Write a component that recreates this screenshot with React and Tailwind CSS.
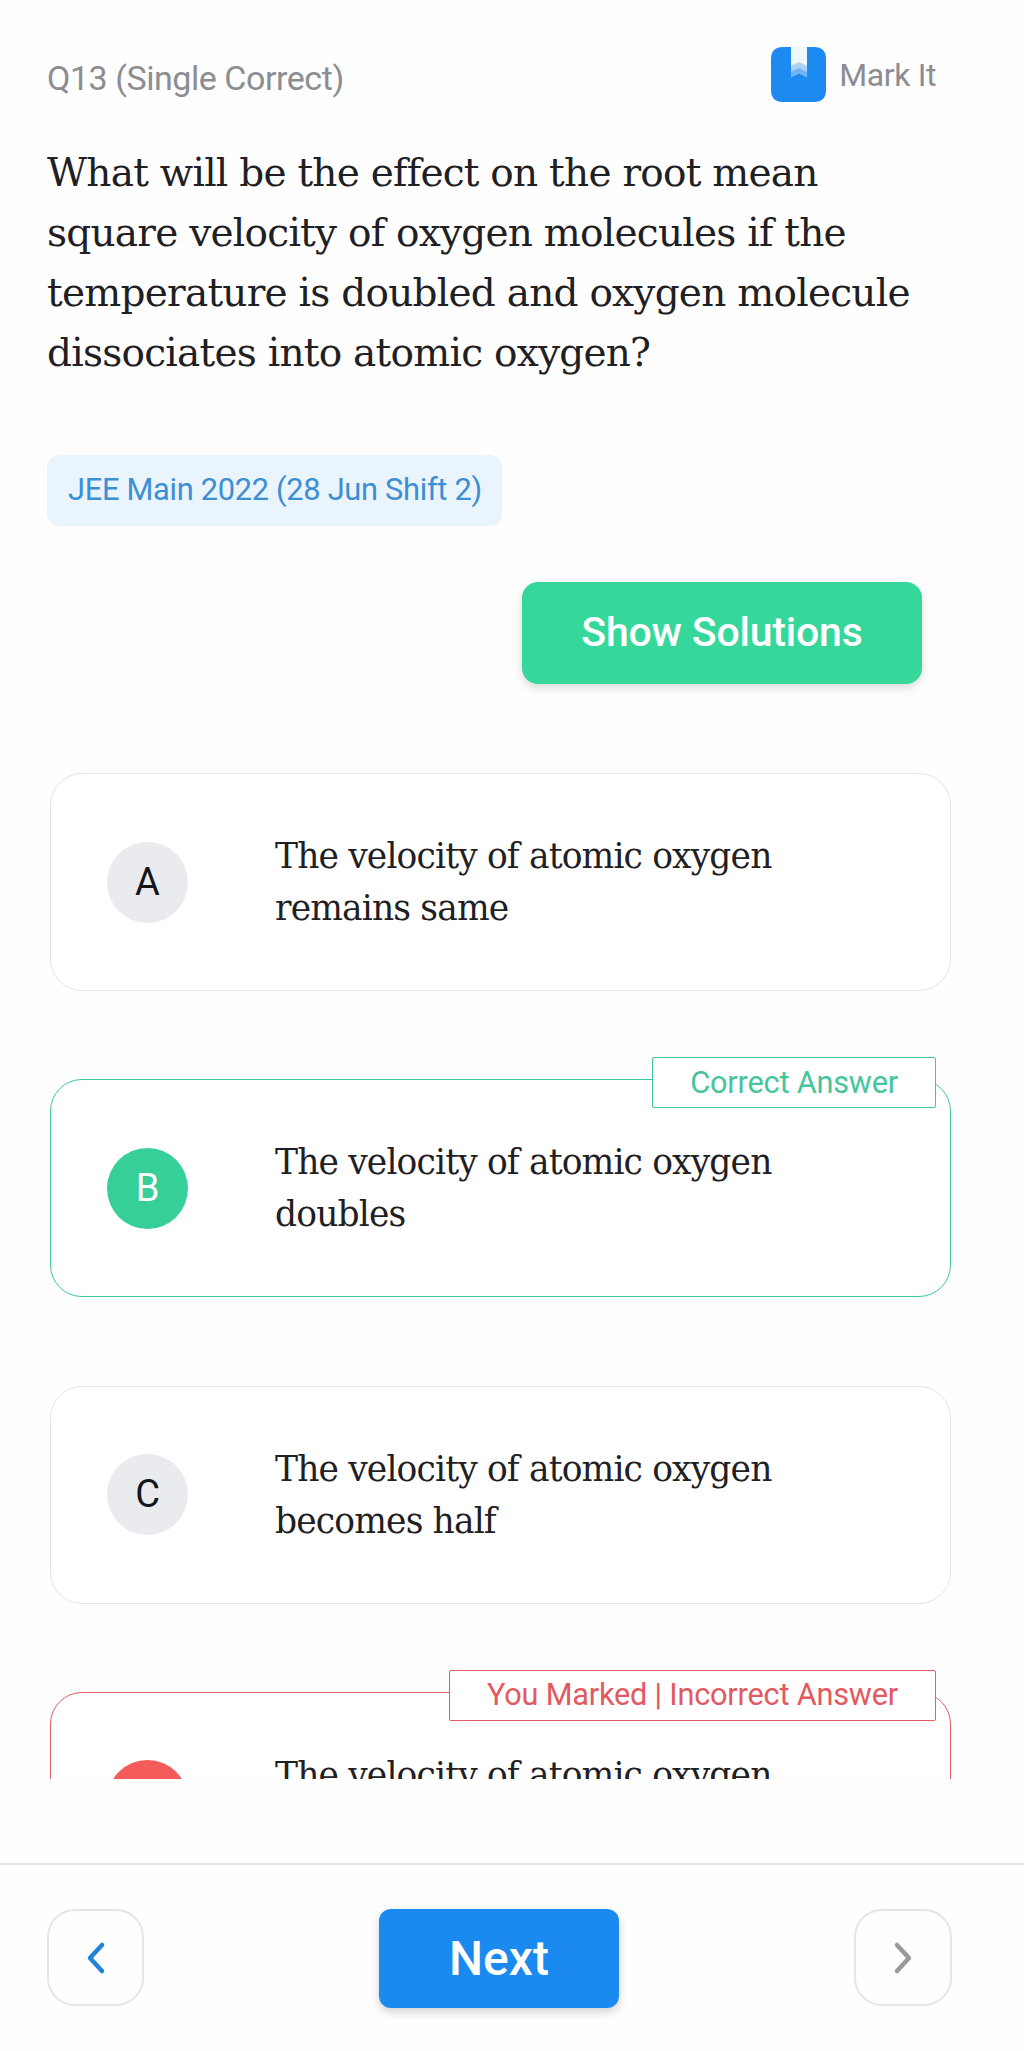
import React from "react";

const sans = "font-['Roboto',sans-serif]";
const serif = "font-['DejaVu_Serif',serif]";

function Option({ letter, second, tone, tag }) {
  const border =
    tone === "green" ? "border-[#3fc6a2]" : tone === "red" ? "border-[#e05f64]" : "border-[#e2e4e6]";
  const circle =
    tone === "green"
      ? "bg-[#36cf97] text-white"
      : tone === "red"
        ? "bg-[#f45b5b] text-white"
        : "bg-[#e9ebef] text-[#15161c]";
  const tagTone =
    tone === "green" ? "border-[#3fc6a2] text-[#45c59c]" : "border-[#e05f64] text-[#e2595f]";
  return (
    <div className={`relative h-[218px] ml-[50px] w-[901px] border-[1.5px] ${border} rounded-[32px] bg-white flex items-center pl-[56px] shrink-0`}>
      {tag && (
        <div className={`absolute right-[14px] top-[-23px] h-[51px] bg-white border-[1.5px] rounded-[2px] ${tagTone} flex items-center px-[37px] ${sans} text-[30.7px] tracking-[-0.2px] whitespace-nowrap`}>
          {tag}
        </div>
      )}
      <div className={`w-[81px] h-[81px] rounded-full ${circle} flex items-center justify-center ${sans} text-[38px] shrink-0`}>
        {letter}
      </div>
      <div className={`ml-[87px] ${serif} text-[34.5px] leading-[52px] text-[#1f2023] tracking-[-0.85px]`}>
        <div>The velocity of atomic oxygen</div>
        <div>{second}</div>
      </div>
    </div>
  );
}

export default function App() {
  return (
    <div className="w-[1024px] h-[2051px] bg-[#fefefe] flex flex-col overflow-hidden">
      <div className="h-[1779px] overflow-hidden shrink-0">
        <div className="relative h-[132px] flex justify-between pl-[47px] pr-[88px] pt-[47px]">
          <div className={`${sans} text-[34px] text-[#8b8d92] leading-[62px] tracking-[-0.45px]`}>Q13 (Single Correct)</div>
          <div className="flex items-start gap-[13px]">
            <svg width="55" height="55" viewBox="0 0 55 55">
              <path d="M12 0 H43 Q55 0 55 12 V43 Q55 55 43 55 H12 Q0 55 0 43 V12 Q0 0 12 0 Z" fill="#1c8af0" />
              <path d="M20 0 H36 V30 L28 26 L20 30 Z" fill="#f1f6fb" />
              <path d="M20 19 L28 15 L36 19 V30 L28 26 L20 30 Z" fill="#a9d2f6" />
              <path d="M20 25 L28 21 L36 25 V30 L28 26 L20 30 Z" fill="#6fb4f3" />
            </svg>
            <div className={`${sans} text-[32px] text-[#8b8d92] leading-[56px] tracking-[-0.4px]`}>Mark It</div>
          </div>
        </div>
        <div className={`pl-[47px] mt-[11px] ${serif} text-[39px] leading-[60px] text-[#1f2023] tracking-[-0.75px]`}>
          <div>What will be the effect on the root mean</div>
          <div>square velocity of oxygen molecules if the</div>
          <div>temperature is doubled and oxygen molecule</div>
          <div>dissociates into atomic oxygen?</div>
        </div>
        <div className={`ml-[47px] mt-[72px] w-[455px] h-[71px] rounded-[12px] bg-[#eaf4fc] flex items-center pl-[21px] ${sans} text-[30.8px] text-[#3c8fd2] tracking-[-0.3px]`}>
          JEE Main 2022 (28 Jun Shift 2)
        </div>
        <div className="flex justify-end pr-[102px] mt-[56px]">
          <div className={`w-[400px] h-[102px] rounded-[16px] bg-[#36d79a] shadow-[0_4px_10px_rgba(0,0,0,0.14)] flex items-center justify-center ${sans} font-medium text-[41px] text-white tracking-[-0.2px]`}>
            Show Solutions
          </div>
        </div>
        <div className="flex flex-col gap-[88.25px] mt-[89px]">
          <Option letter="A" second="remains same" />
          <Option letter="B" second="doubles" tone="green" tag="Correct Answer" />
          <Option letter="C" second="becomes half" />
          <Option letter="D" second="is doubled" tone="red" tag="You Marked | Incorrect Answer" />
        </div>
      </div>
      <div className="mt-[84px] border-t-2 border-[#e3e3e4] h-[188px] flex items-start justify-between px-[47px] pt-[44px] pr-[72px]">
        <div className="w-[97px] h-[97px] rounded-[28px] border-2 border-[#e4e6e8] flex items-center justify-center">
          <svg width="24" height="36" viewBox="0 0 24 36" fill="none" stroke="#2283d6" strokeWidth="4.5" strokeLinecap="round" strokeLinejoin="round">
            <path d="M18 5 L6 18 L18 31" />
          </svg>
        </div>
        <div className={`w-[240px] h-[99px] rounded-[12px] bg-[#1a8af0] shadow-[0_4px_10px_rgba(0,0,0,0.18)] flex items-center justify-center ${sans} font-medium text-[48px] text-white`}>
          Next
        </div>
        <div className="w-[98px] h-[97px] rounded-[28px] border-2 border-[#e4e6e8] flex items-center justify-center">
          <svg width="24" height="36" viewBox="0 0 24 36" fill="none" stroke="#9a9a9d" strokeWidth="4.5" strokeLinecap="round" strokeLinejoin="round">
            <path d="M6 5 L18 18 L6 31" />
          </svg>
        </div>
      </div>
    </div>
  );
}
